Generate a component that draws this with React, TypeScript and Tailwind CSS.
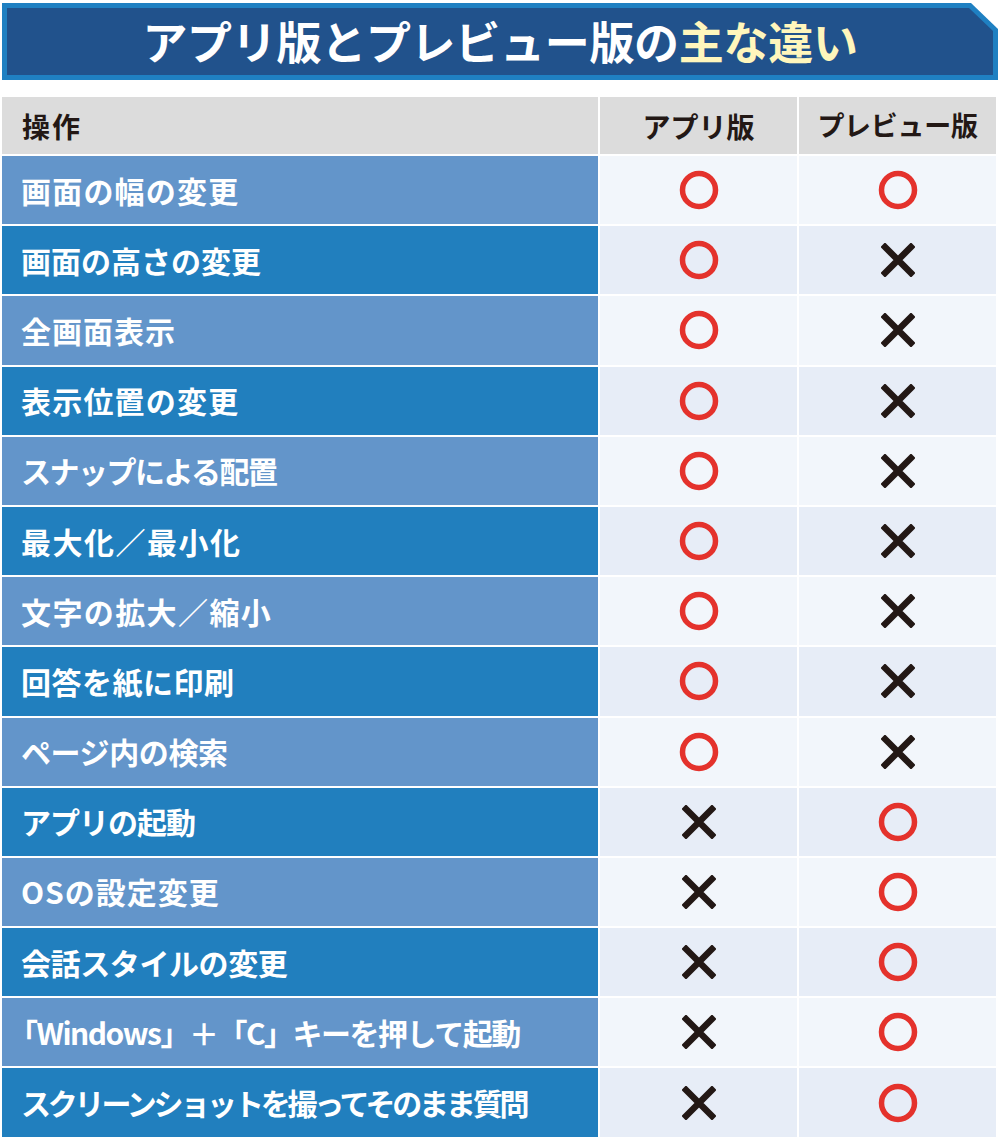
import React from "react";

type Mark = "o" | "x";

const rows: [string, Mark, Mark, string][] = [
  ["画面の幅の変更", "o", "o", "tracking-[1.2px] pl-[19px]"],
  ["画面の高さの変更", "o", "x", "tracking-[0px] pl-[19px]"],
  ["全画面表示", "o", "x", "tracking-[1px] pl-[19px]"],
  ["表示位置の変更", "o", "x", "tracking-[1.2px] pl-[19px]"],
  ["スナップによる配置", "o", "x", "tracking-[-1.5px] pl-[19px]"],
  ["最大化／最小化", "o", "x", "tracking-[1.5px] pl-[19px]"],
  ["文字の拡大／縮小", "o", "x", "tracking-[1.4px] pl-[19px]"],
  ["回答を紙に印刷", "o", "x", "tracking-[0.5px] pl-[19px]"],
  ["ページ内の検索", "o", "x", "tracking-[-0.4px] pl-[19px]"],
  ["アプリの起動", "x", "o", "tracking-[-1px] pl-[19px]"],
  ["OSの設定変更", "x", "o", "tracking-[1px] pl-[19px]"],
  ["会話スタイルの変更", "x", "o", "tracking-[-0.4px] pl-[19px]"],
  ["「Windows」＋「C」キーを押して起動", "x", "o", "tracking-[-1.5px] pl-[6px]"],
  ["スクリーンショットを撮ってそのまま質問", "x", "o", "tracking-[-3.2px] pl-[19px]"],
];

function Circle() {
  return (
    <svg width="40" height="40" viewBox="0 0 40 40">
      <circle cx="20" cy="20" r="16.5" fill="none" stroke="#e4322c" strokeWidth="5.5" />
    </svg>
  );
}

function Cross() {
  return (
    <svg width="34" height="34" viewBox="0 0 34 34">
      <path d="M4 4 L30 30 M30 4 L4 30" stroke="#231815" strokeWidth="6.5" strokeLinecap="square" />
    </svg>
  );
}

function MarkCell({ m, odd }: { m: Mark; odd: boolean }) {
  return (
    <div className={`flex items-center justify-center ${odd ? "bg-[#f2f6fb]" : "bg-[#e7edf7]"}`}>
      {m === "o" ? <Circle /> : <Cross />}
    </div>
  );
}

export default function App() {
  const font = { fontFamily: '"Noto Sans CJK JP", "Noto Sans", sans-serif' };
  return (
    <div className="w-[1000px] h-[1142px] bg-white overflow-hidden" style={font}>
      <div className="pt-[3px] pl-[2px] pr-[2px]">
        <div className="bg-[#1f80c2] p-[5px] h-[77px] [clip-path:polygon(0_0,calc(100%-27px)_0,100%_26px,100%_100%,0_100%)]">
          <div className="bg-[#21528c] h-full flex items-center justify-center [clip-path:polygon(0_0,calc(100%-24px)_0,100%_23px,100%_100%,0_100%)]">
            <span className="text-[45px] font-bold leading-none text-white tracking-[-0.3px] -mt-[2px]">
              アプリ版とプレビュー版の<span className="text-[#fff6bc]">主な違い</span>
            </span>
          </div>
        </div>
      </div>
      <div className="mt-[17px] ml-[2px] grid grid-cols-[596px_197px_197px] gap-[2px]">
        <div className="h-[57px] bg-[#dcdcdc] flex items-center pl-[20px] text-[28px] tracking-[2px] font-bold text-[#231815]">
          操作
        </div>
        <div className="h-[57px] bg-[#dcdcdc] flex items-center justify-center text-[28px] tracking-[0px] font-bold text-[#231815]">
          アプリ版
        </div>
        <div className="h-[57px] bg-[#dcdcdc] flex items-center justify-center text-[27px] tracking-[-0.3px] font-bold text-[#231815]">
          プレビュー版
        </div>
        {rows.map(([label, a, b, cls], i) => {
          const odd = i % 2 === 0;
          return (
            <React.Fragment key={i}>
              <div
                className={`h-[68.2px] flex items-center text-[30px] font-bold text-white whitespace-nowrap ${
                  odd ? "bg-[#6395ca]" : "bg-[#217fbe]"
                } ${cls}`}
              >
                {label}
              </div>
              <MarkCell m={a} odd={odd} />
              <MarkCell m={b} odd={odd} />
            </React.Fragment>
          );
        })}
      </div>
    </div>
  );
}
